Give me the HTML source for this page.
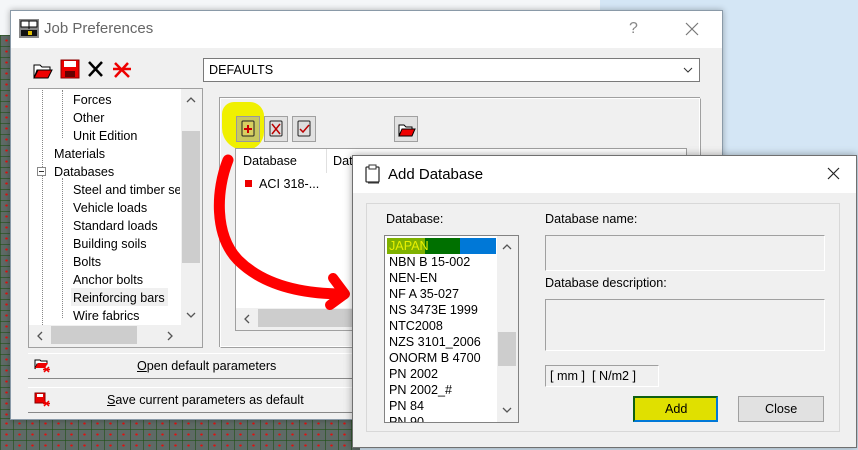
<!DOCTYPE html>
<html><head><style>
*{box-sizing:border-box;margin:0;padding:0}
body{width:858px;height:450px;overflow:hidden;position:relative;font-family:"Liberation Sans",sans-serif;font-size:12.6px;color:#000;background:#d4e6f5}
.a{position:absolute}
.t{position:absolute;white-space:nowrap;font-size:12.6px}
.mesh{background-color:#5e6a66;background-image:linear-gradient(90deg,rgba(30,80,20,.6) 1px,transparent 1px),linear-gradient(rgba(30,80,20,.6) 1px,transparent 1px),radial-gradient(#e01010 1px,transparent 1.5px);background-size:13px 11px,13px 11px,13px 11px}
.btn3{border:1px solid #a0a0a0;background:#e1e1e1}
.sb{background:#f0f0f0}
</style></head><body>
<div class="a" style="left:0;top:0;width:858px;height:450px;background:#d4e6f5"></div>
<div class="a" style="left:0;top:0;width:600px;height:40px;background:#f4f6f8"></div>
<div class="a mesh" style="left:0;top:35px;width:12px;height:415px"></div>
<div class="a mesh" style="left:0;top:418px;width:360px;height:32px"></div>

<div class="a" style="left:10px;top:10px;width:713px;height:410px;background:#f0f0f0;border:1px solid #8a9aa8;box-shadow:0 0 6px rgba(0,0,0,.3)"></div>
<div class="a" style="left:11px;top:11px;width:711px;height:37px;background:#fff"></div>
<svg class="a" style="left:19px;top:19px" width="22" height="20"><rect x="0" y="0" width="20" height="19" fill="#888"/><rect x="2" y="2" width="16" height="6" fill="#fff" stroke="#000"/><line x1="10" y1="2" x2="10" y2="10" stroke="#000"/><rect x="2" y="11" width="16" height="6" fill="#111"/><rect x="9" y="12" width="4" height="4" fill="#e0c000"/></svg>
<div class="t" style="left:44px;top:20px;font-size:15px;color:#666">Job Preferences</div>
<div class="t" style="left:629px;top:20px;font-size:16px;color:#888">?</div>
<svg class="a" style="left:685px;top:22px" width="14" height="14"><path d="M1 1l12 12M13 1L1 13" stroke="#777" stroke-width="1.2"/></svg>

<svg class="a" style="left:33px;top:59px" width="110" height="20">
<path d="M1 6h6l2 2h8v3H4l-3 8z" fill="#fff" stroke="#000"/><path d="M1 19l4-8h14l-4 8z" fill="#e00" stroke="#000"/>
<rect x="28" y="1" width="18" height="18" fill="#e00" stroke="#800"/><rect x="31" y="2" width="12" height="6" fill="#fff"/><rect x="32" y="12" width="10" height="6" fill="#600"/>
<path d="M56 3l13 14M69 3L56 17" stroke="#000" stroke-width="2.5"/>
<path d="M82 4l14 14M95 4L82 18M80 10h18" stroke="#e00" stroke-width="2.5"/></svg>
<div class="a" style="left:203px;top:58px;width:497px;height:24px;background:#fff;border:1px solid #7a7a7a"></div>
<div class="t" style="left:209px;top:63px">DEFAULTS</div>
<svg class="a" style="left:683px;top:67px" width="10" height="6"><path d="M1 1l4 4 4-4" stroke="#333" fill="none"/></svg>

<div class="a" style="left:28px;top:88px;width:175px;height:260px;background:#fff;border:1px solid #a0a0a0"></div>
<div class="a" style="left:42px;top:90px;height:235px;border-left:1px dotted #888"></div>
<div class="a" style="left:62px;top:90px;height:48px;border-left:1px dotted #888"></div>
<div class="a" style="left:62px;top:178px;height:140px;border-left:1px dotted #888"></div>
<div class="t" style="left:73px;top:93px">Forces</div>
<div class="t" style="left:73px;top:111px">Other</div>
<div class="t" style="left:73px;top:129px">Unit Edition</div>
<div class="t" style="left:54px;top:147px">Materials</div>
<div class="a" style="left:37px;top:167px;width:9px;height:9px;border:1px solid #888;background:#fff"></div>
<div class="a" style="left:39px;top:171px;width:5px;height:1px;background:#333"></div>
<div class="t" style="left:54px;top:165px">Databases</div>
<div class="t" style="left:73px;top:183px;width:107px;overflow:hidden">Steel and timber se</div>
<div class="t" style="left:73px;top:201px">Vehicle loads</div>
<div class="t" style="left:73px;top:219px">Standard loads</div>
<div class="t" style="left:73px;top:237px">Building soils</div>
<div class="t" style="left:73px;top:255px">Bolts</div>
<div class="t" style="left:73px;top:273px">Anchor bolts</div>
<div class="a" style="left:71px;top:288px;width:97px;height:18px;background:#f0f0f0"></div>
<div class="t" style="left:73px;top:291px">Reinforcing bars</div>
<div class="t" style="left:73px;top:309px">Wire fabrics</div>
<div class="a sb" style="left:181px;top:89px;width:21px;height:236px"></div>
<div class="a" style="left:182px;top:131px;width:18px;height:132px;background:#cdcdcd"></div>
<svg class="a" style="left:186px;top:97px" width="10" height="6"><path d="M1 5l4-4 4 4" stroke="#555" fill="none" stroke-width="1.3"/></svg>
<svg class="a" style="left:186px;top:312px" width="10" height="6"><path d="M1 1l4 4 4-4" stroke="#555" fill="none" stroke-width="1.3"/></svg>
<div class="a sb" style="left:29px;top:325px;width:173px;height:22px"></div>
<div class="a" style="left:51px;top:326px;width:86px;height:18px;background:#cdcdcd"></div>
<svg class="a" style="left:37px;top:331px" width="6" height="10"><path d="M5 1L1 5l4 4" stroke="#555" fill="none" stroke-width="1.3"/></svg>
<svg class="a" style="left:167px;top:331px" width="6" height="10"><path d="M1 1l4 4-4 4" stroke="#555" fill="none" stroke-width="1.3"/></svg>

<div class="a" style="left:220px;top:98px;width:481px;height:250px;border:1px solid #a0a0a0;border-top-color:#fff;border-left-color:#fff;box-shadow:inset -1px -1px 0 #fff, -1px -1px 0 #a0a0a0"></div>
<div class="a" style="left:222px;top:102px;width:42px;height:48px;background:#f0f000;border-radius:12px 14px 18px 22px"></div>
<div class="a btn3" style="left:236px;top:116px;width:24px;height:26px;background:#c8c860;border-color:#999"></div>
<div class="a btn3" style="left:264px;top:116px;width:24px;height:26px"></div>
<div class="a btn3" style="left:292px;top:116px;width:24px;height:26px"></div>
<div class="a btn3" style="left:394px;top:116px;width:24px;height:26px"></div>
<svg class="a" style="left:236px;top:116px" width="184" height="26">
<rect x="6" y="5" width="12" height="15" rx="1" fill="#d8d060" stroke="#222"/><path d="M12 9v8M8 13h8" stroke="#c00" stroke-width="2"/>
<rect x="34" y="5" width="12" height="15" rx="1" fill="#ddd" stroke="#222"/><path d="M36 8l8 10M44 8l-8 10" stroke="#b00" stroke-width="1.5"/>
<rect x="62" y="5" width="12" height="15" rx="1" fill="#ddd" stroke="#222"/><path d="M64 13l3 3 6-7" stroke="#b00" stroke-width="1.5" fill="none"/>
<path d="M163 9h5l2 2h6v3h-10l-3 6z" fill="#fff" stroke="#000"/><path d="M163 20l3-7h13l-3 7z" fill="#e00" stroke="#000"/></svg>
<div class="a" style="left:235px;top:148px;width:452px;height:183px;background:#fff;border:1px solid #a0a0a0"></div>
<div class="a" style="left:326px;top:149px;width:1px;height:24px;background:#e0e0e0"></div>
<div class="t" style="left:243px;top:154px">Database</div>
<div class="t" style="left:333px;top:154px">Data</div>
<div class="a" style="left:245px;top:180px;width:7px;height:7px;background:#e00"></div>
<div class="t" style="left:259px;top:177px">ACI 318-...</div>
<div class="a sb" style="left:236px;top:308px;width:450px;height:22px"></div>
<div class="a" style="left:258px;top:309px;width:100px;height:18px;background:#cdcdcd"></div>
<svg class="a" style="left:244px;top:314px" width="6" height="10"><path d="M5 1L1 5l4 4" stroke="#555" fill="none" stroke-width="1.3"/></svg>

<div class="a" style="left:28px;top:353px;width:340px;height:26px;border-bottom:1px solid #888;border-top:1px solid #fff"></div>
<div class="t" style="left:137px;top:359px"><u>O</u>pen default parameters</div>
<div class="a" style="left:28px;top:387px;width:340px;height:26px;border-bottom:1px solid #888;border-top:1px solid #fff"></div>
<div class="t" style="left:107px;top:393px"><u>S</u>ave current parameters as default</div>
<svg class="a" style="left:34px;top:358px" width="18" height="54"><path d="M1 2h5l1 1h6v3H3l-2 5z" fill="#fff" stroke="#000"/><path d="M1 10l3-5h10l-3 5z" fill="#e00"/><path d="M10 9l5 5M15 9l-5 5M9 11.5h7" stroke="#e00" stroke-width="1.5"/>
<rect x="1" y="35" width="10" height="10" fill="#e00" stroke="#800"/><rect x="3" y="36" width="6" height="3" fill="#fff"/><path d="M10 43l5 5M15 43l-5 5M9 45.5h7" stroke="#e00" stroke-width="1.5"/></svg>

<svg class="a" style="left:0;top:0" width="858" height="450"><path d="M228 160c-12 30-14 75 10 100 28 28 70 34 106 34" stroke="#f00" stroke-width="11" fill="none" stroke-linecap="round"/><path d="M333 278l12 16-15 11" stroke="#f00" stroke-width="10" fill="none" stroke-linecap="round" stroke-linejoin="round"/></svg>

<div class="a" style="left:352px;top:155px;width:505px;height:293px;background:#f0f0f0;border:1px solid #707070;box-shadow:0 0 8px rgba(0,0,0,.35)"></div>
<div class="a" style="left:353px;top:156px;width:503px;height:37px;background:#fff"></div>
<svg class="a" style="left:365px;top:164px" width="16" height="20"><rect x="1" y="3" width="13" height="15" rx="1" fill="#fff" stroke="#333" stroke-width="1.3"/><rect x="4" y="1" width="7" height="4" fill="#fff" stroke="#333"/><line x1="3" y1="18.5" x2="14" y2="18.5" stroke="#333" stroke-width="2"/></svg>
<div class="t" style="left:388px;top:166px;font-size:15px">Add Database</div>
<svg class="a" style="left:827px;top:167px" width="13" height="13"><path d="M1 1l11 11M12 1L1 12" stroke="#222" stroke-width="1.2"/></svg>
<div class="a" style="left:366px;top:203px;width:474px;height:229px;border:1px solid #d8d8d8"></div>
<div class="t" style="left:386px;top:212px">Database:</div>
<div class="t" style="left:545px;top:212px">Database name:</div>
<div class="a" style="left:545px;top:235px;width:280px;height:36px;border:1px solid #a0a0a0;border-right-color:#fff;border-bottom-color:#fff"></div>
<div class="t" style="left:545px;top:276px">Database description:</div>
<div class="a" style="left:545px;top:299px;width:280px;height:52px;border:1px solid #a0a0a0;border-right-color:#fff;border-bottom-color:#fff"></div>
<div class="a" style="left:545px;top:365px;width:114px;height:22px;border:1px solid #a0a0a0;border-right-color:#fff;border-bottom-color:#fff"></div>
<div class="t" style="left:550px;top:369px">[ mm ]&nbsp;&nbsp;[ N/m2 ]</div>
<div class="a" style="left:384px;top:235px;width:135px;height:188px;background:#fff;border:1px solid #828282;overflow:hidden">
 <div class="a" style="left:2px;top:2px;width:109px;height:16px;background:#0078d7"></div>
 <div class="a" style="left:2px;top:2px;width:73px;height:16px;background:#007000"></div>
 <div class="a" style="left:2px;top:2px;width:38px;height:16px;background:#e8e800;opacity:.55"></div>
 <div class="t" style="left:4px;top:3px;color:#e8f000">JAPAN</div>
 <div class="t" style="left:4px;top:19px">NBN B 15-002</div>
 <div class="t" style="left:4px;top:35px">NEN-EN</div>
 <div class="t" style="left:4px;top:51px">NF A 35-027</div>
 <div class="t" style="left:4px;top:67px">NS 3473E 1999</div>
 <div class="t" style="left:4px;top:83px">NTC2008</div>
 <div class="t" style="left:4px;top:99px">NZS 3101_2006</div>
 <div class="t" style="left:4px;top:115px">ONORM B 4700</div>
 <div class="t" style="left:4px;top:131px">PN 2002</div>
 <div class="t" style="left:4px;top:147px">PN 2002_#</div>
 <div class="t" style="left:4px;top:163px">PN 84</div>
 <div class="t" style="left:4px;top:179px">PN 90</div>
 <div class="a sb" style="left:112px;top:0;width:21px;height:186px"></div>
 <div class="a" style="left:113px;top:96px;width:18px;height:34px;background:#cdcdcd"></div>
 <svg class="a" style="left:117px;top:8px" width="10" height="6"><path d="M1 5l4-4 4 4" stroke="#555" fill="none" stroke-width="1.3"/></svg>
 <svg class="a" style="left:117px;top:171px" width="10" height="6"><path d="M1 1l4 4 4-4" stroke="#555" fill="none" stroke-width="1.3"/></svg>
</div>
<div class="a" style="left:633px;top:396px;width:85px;height:26px;background:#e0e000;border:2px solid #0078d7;border-left-color:#106010;border-top-color:#106010"></div>
<div class="t" style="left:665px;top:402px">Add</div>
<div class="a btn3" style="left:738px;top:396px;width:86px;height:26px"></div>
<div class="t" style="left:765px;top:402px">Close</div>
</body></html>
